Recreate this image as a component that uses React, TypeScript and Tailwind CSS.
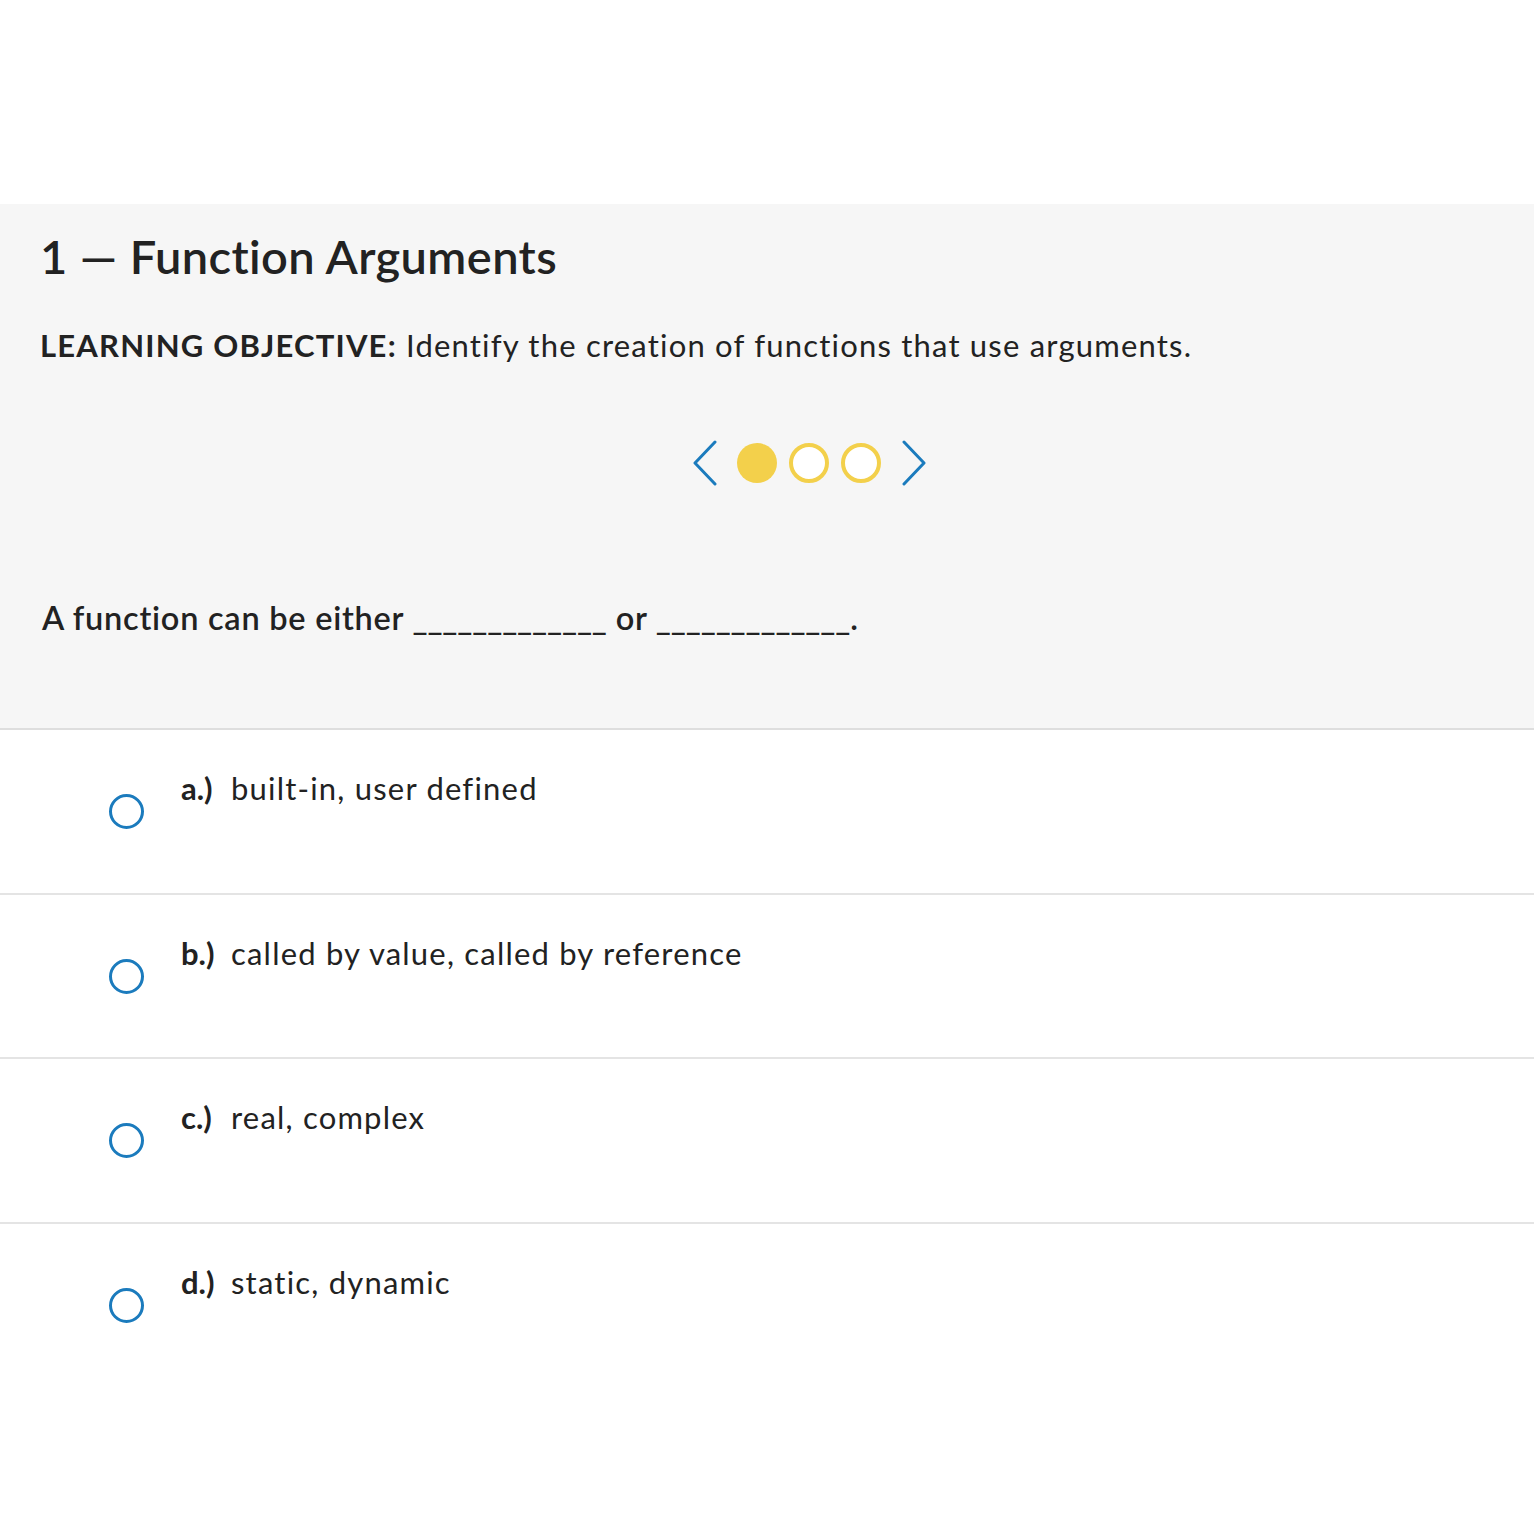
import React from "react";

const options = [
  { key: "a.)", text: "built-in, user defined" },
  { key: "b.)", text: "called by value, called by reference" },
  { key: "c.)", text: "real, complex" },
  { key: "d.)", text: "static, dynamic" },
];

const Chevron = ({ dir }: { dir: "left" | "right" }) => (
  <svg width="24" height="46" viewBox="0 0 24 46" fill="none" className="shrink-0">
    <path
      d={dir === "left" ? "M22 2 L2 23 L22 44" : "M2 2 L22 23 L2 44"}
      stroke="#1b7bbd"
      strokeWidth="3"
      strokeLinecap="round"
      strokeLinejoin="round"
    />
  </svg>
);

const Blank = () => (
  <span className="inline-block tracking-[-0.1px]">_____________</span>
);

export default function App() {
  return (
    <div className="min-h-[1534px] bg-white text-[#222] font-['Lato','Liberation_Sans',sans-serif]">
      <div className="h-[204px]" />

      {/* Question header */}
      <section className="bg-[#f6f6f6] border-b-2 border-[#dedede] h-[526px] px-10 pt-[22px]">
        <h1 className="text-[47px] leading-[60px] font-semibold tracking-[0.4px]">
          1 — Function Arguments
        </h1>
        <p className="mt-[39px] text-[31px] leading-[40px] tracking-[1.2px]">
          <span className="font-bold">LEARNING OBJECTIVE:</span> Identify the creation of functions that use
          arguments.
        </p>

        <div className="mt-[75px] flex items-center pl-[653px]">
          <Chevron dir="left" />
          <div className="ml-[20px] mr-[21px] flex items-center gap-[12px]">
            <span className="w-10 h-10 rounded-full bg-[#f3d04b]" />
            <span className="w-10 h-10 rounded-full bg-white border-4 border-[#f3d04b]" />
            <span className="w-10 h-10 rounded-full bg-white border-4 border-[#f3d04b]" />
          </div>
          <Chevron dir="right" />
        </div>

        <p className="mt-[112px] pl-[2px] text-[32.5px] leading-[40px] font-semibold tracking-[0.75px]">
          A function can be either <Blank /> or <Blank />.
        </p>
      </section>

      {/* Answer options */}
      <ul>
        {options.map((o, i) => (
          <li
            key={o.key}
            className={`h-[164.5px] flex items-start pl-[109px] pt-[38px] ${
              i < options.length - 1 ? "border-b-2 border-[#e4e4e4]" : ""
            }`}
          >
            <span className="mt-[26px] w-[35px] h-[35px] shrink-0 rounded-full border-[3.5px] border-[#1b7bbd]" />
            <div className="ml-[37px] text-[31px] leading-[40px] flex">
              <span className="font-bold w-[50px]">{o.key}</span>
              <span className="tracking-[1.2px]">{o.text}</span>
            </div>
          </li>
        ))}
      </ul>
    </div>
  );
}
